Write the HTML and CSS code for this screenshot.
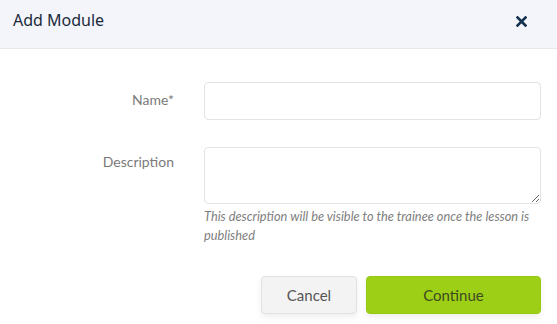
FILE: index.html
```
<!DOCTYPE html>
<html>
<head>
<meta charset="utf-8">
<link rel="stylesheet" href="styles.css">
</head>
<body>
<div class="modal">
  <div class="header">
    <div class="title">Add Module</div>
    <button class="close" aria-label="Close">
      <svg width="11" height="11" viewBox="0 0 11 11"><path d="M1.5 1.5 L9.5 9.5 M9.5 1.5 L1.5 9.5" stroke="#14304f" stroke-width="2.6" stroke-linecap="square"/></svg>
    </button>
  </div>
  <div class="body">
    <div class="row">
      <label class="label label-name">Name*</label>
      <div class="field"><input class="input" type="text"></div>
    </div>
    <div class="row row-desc">
      <label class="label label-desc">Description</label>
      <div class="field">
        <textarea class="textarea"></textarea>
        <div class="help">This description will be visible to the trainee once the lesson is published</div>
      </div>
    </div>
    <div class="actions">
      <button class="btn btn-cancel">Cancel</button>
      <button class="btn btn-continue">Continue</button>
    </div>
  </div>
</div>
</body>
</html>
```
FILE: styles.css
```
html, body { margin: 0; padding: 0; background: #fff; }
body { width: 557px; height: 324px; overflow: hidden; font-family: Lato, "Open Sans", sans-serif; }
.modal { width: 557px; }
.header {
  height: 48px;
  background: #f4f5fa;
  border-bottom: 1px solid #e6e8ee;
  display: flex;
  align-items: center;
  justify-content: space-between;
  padding: 0 30px 0 13px;
}
.title { font-family: "Noto Sans", sans-serif; font-size: 16px; color: #1b2a3c; margin-top: -8px; }
.close { border: 0; background: transparent; padding: 0; display: flex; margin-top: -5px; }
.body { padding-top: 33px; }
.row { display: grid; grid-template-columns: 174px 337px; column-gap: 30px; }
.row-desc { margin-top: 27px; }
.label { font-size: 14px; color: #7a7a7a; text-align: right; }
.label-name { padding-top: 9px; }
.label-desc { padding-top: 6px; }
.input, .textarea {
  box-sizing: border-box;
  width: 337px;
  border: 1px solid #e3e3e3;
  border-radius: 4px;
  display: block;
  margin: 0;
  outline: none;
}
.input { height: 38px; }
.textarea { height: 57px; resize: vertical; }
.help {
  font-size: 12.8px;
  font-style: italic;
  color: #808080;
  line-height: 19px;
  margin-top: 3px;
  padding-right: 4px;
}
.actions { display: flex; justify-content: flex-end; gap: 9px; padding-right: 16px; margin-top: 31px; }
.btn {
  height: 38px;
  border-radius: 4px;
  font-family: Lato, sans-serif;
  font-size: 15px;
  box-shadow: 0 3px 6px rgba(0,0,0,0.07);
}
.btn-cancel { width: 96px; background: #f3f3f3; border: 1px solid #e2e2e2; color: #555; }
.btn-continue { width: 175px; background: #9ccf15; border: 1px solid #97c812; color: #3e4a22; }
```
